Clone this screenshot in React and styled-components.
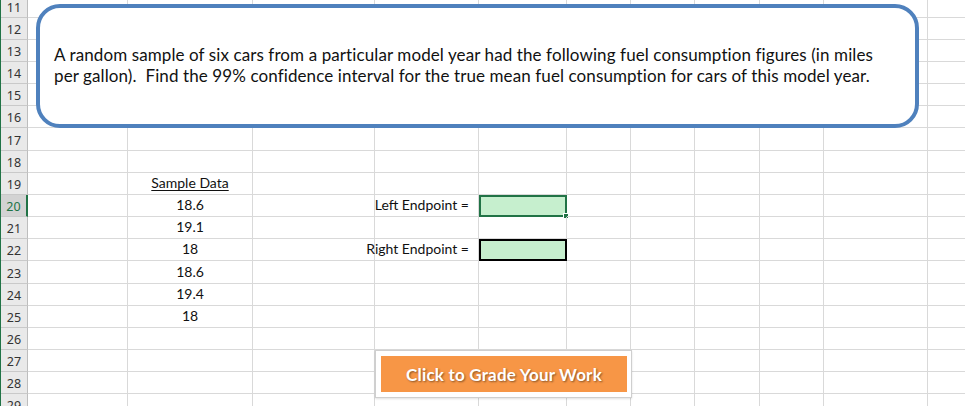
import React from "react";
import styled, { createGlobalStyle, css } from "styled-components";

const Global = createGlobalStyle`
  html, body { margin: 0; padding: 0; background: #fff; overflow: hidden; }
  * { box-sizing: border-box; }
`;

const COLS = [100, 125, 122, 104, 88, 64, 64, 65, 64, 104, 60];
const ROWS = [
  { n: 11, h: 18 }, { n: 12, h: 22 }, { n: 13, h: 22 }, { n: 14, h: 22 },
  { n: 15, h: 22 }, { n: 16, h: 22 }, { n: 17, h: 23 }, { n: 18, h: 22 },
  { n: 19, h: 22 }, { n: 20, h: 22 }, { n: 21, h: 22 }, { n: 22, h: 22 },
  { n: 23, h: 23 }, { n: 24, h: 22 }, { n: 25, h: 22 }, { n: 26, h: 22 },
  { n: 27, h: 22 }, { n: 28, h: 22 }, { n: 29, h: 22 },
];

const Sheet = styled.div`
  position: relative;
  width: 965px;
  height: 406px;
  overflow: hidden;
  background: #fff;
  font-family: Lato, "Open Sans", sans-serif;
`;

const Grid = styled.div`
  display: grid;
  grid-template-columns: 27px ${COLS.map((c) => c + "px").join(" ")};
  grid-template-rows: ${ROWS.map((r) => r.h + "px").join(" ")};
  border-left: 1px solid #217346;
`;

const RowHead = styled.div`
  display: flex;
  align-items: flex-end;
  justify-content: center;
  padding: 0 0 2px 0;
  font-family: "Noto Sans", "Open Sans", sans-serif;
  font-size: 12.5px;
  line-height: 14px;
  color: ${(p) => (p.$active ? "#217346" : "#333")};
  background: ${(p) => (p.$active ? "#d3d3d3" : "#e9e9e9")};
  border-bottom: 1px solid #c9c9c9;
  border-right: ${(p) => (p.$active ? "2px solid #217346" : "1px solid #bdbdbd")};
`;

const answerStyle = css`
  background: #c6efce;
  border: 2px solid ${(p) => (p.$answer === "selected" ? "#217346" : "#000")};
`;

const Cell = styled.div`
  position: relative;
  display: flex;
  align-items: flex-end;
  justify-content: ${(p) =>
    p.$align === "right" ? "flex-end" : p.$align === "center" ? "center" : "flex-start"};
  padding: 0 ${(p) => (p.$align === "right" ? "9px" : "3px")} 3px 3px;
  border-right: 1px solid #d9d9d9;
  border-bottom: 1px solid #d9d9d9;
  font-size: 14px;
  line-height: 16px;
  color: #111;
  white-space: nowrap;
  ${(p) => p.$answer && answerStyle}
`;

const Heading = styled.span`
  text-decoration: underline;
  text-underline-offset: 2px;
`;

const FillHandle = styled.div`
  position: absolute;
  right: -4px;
  bottom: -4px;
  width: 6px;
  height: 6px;
  background: #217346;
  border: 1px solid #fff;
`;

const TextBox = styled.div`
  position: absolute;
  left: 36px;
  top: 4px;
  width: 883px;
  height: 124px;
  border: 4px solid #4f81bd;
  border-radius: 24px;
  background: #fff;
  display: flex;
  flex-direction: column;
  justify-content: center;
  padding: 0 0 2px 14px;
  font-size: 17px;
  line-height: 21px;
  letter-spacing: 0.1px;
  color: #111;
`;

const Line = styled.div`
  white-space: nowrap;
`;

const ButtonFrame = styled.div`
  position: absolute;
  left: 375px;
  top: 350px;
  width: 257px;
  height: 48px;
  padding: 5px 4px 5px 5px;
  background: #fff;
  border: 1px solid #cfcfcf;
  box-shadow: 0 1px 2px rgba(0, 0, 0, 0.12);
`;

const GradeButton = styled.button`
  width: 100%;
  height: 100%;
  border: none;
  background: #f79646;
  color: #fff;
  font-family: Lato, "Open Sans", sans-serif;
  font-weight: 700;
  font-size: 17px;
  letter-spacing: 0.2px;
  text-shadow: 1px 1px 2px rgba(0, 0, 0, 0.45);
  cursor: pointer;
  padding: 0;
`;

const data = ["18.6", "19.1", "18", "18.6", "19.4", "18"];

function cellContent(row, col) {
  // col index: 0=B,1=C,2=D,3=E,4=F
  if (col === 1 && row === 19) return { align: "center", node: <Heading>Sample Data</Heading> };
  if (col === 1 && row >= 20 && row <= 25) return { align: "center", node: data[row - 20] };
  if (col === 3 && row === 20) return { align: "right", node: "Left Endpoint =" };
  if (col === 3 && row === 22) return { align: "right", node: "Right Endpoint =" };
  if (col === 4 && row === 20) return { answer: "selected", node: <FillHandle /> };
  if (col === 4 && row === 22) return { answer: "plain", node: null };
  return { node: null };
}

export default function App() {
  return (
    <Sheet>
      <Global />
      <Grid>
        {ROWS.map((r) => (
          <React.Fragment key={r.n}>
            <RowHead $active={r.n === 20}>{r.n}</RowHead>
            {COLS.map((_, ci) => {
              const c = cellContent(r.n, ci);
              return (
                <Cell key={ci} $align={c.align} $answer={c.answer}>
                  {c.node}
                </Cell>
              );
            })}
          </React.Fragment>
        ))}
      </Grid>
      <TextBox>
        <Line>
          A random sample of six cars from a particular model year had the following fuel consumption figures (in miles
        </Line>
        <Line>
          per gallon).&nbsp; Find the 99% confidence interval for the true mean fuel consumption for cars of this model year.
        </Line>
      </TextBox>
      <ButtonFrame>
        <GradeButton>Click to Grade Your Work</GradeButton>
      </ButtonFrame>
    </Sheet>
  );
}
